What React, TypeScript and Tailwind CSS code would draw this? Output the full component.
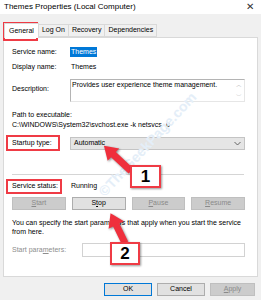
import React from "react";

const font = "font-['Liberation_Sans','Noto_Sans',Arial,sans-serif]";

function Arrow({ x, y, angle, len }: { x: number; y: number; angle: number; len: number }) {
  const h = len - 13;
  return (
    <polygon
      points={`0,-3.5 ${h},-3.5 ${h},-8.5 ${len},0 ${h},8.5 ${h},3.5 0,3.5`}
      transform={`translate(${x} ${y}) rotate(${angle})`}
      fill="#ef2f3c"
    />
  );
}

function Btn({ label, u, state }: { label: string; u: number; state: "on" | "off" | "focus" }) {
  const cls =
    state === "off"
      ? "bg-[#cccccc] border-[#bfbfbf] text-[#8a8a8a]"
      : state === "focus"
      ? "bg-[#e1e1e1] border-[#0078d7] text-black"
      : "bg-[#e1e1e1] border-[#adadad] text-black";
  return (
    <div className={`flex h-[13px] flex-1 items-center justify-center border text-[7px] ${cls}`}>
      <span>
        {label.slice(0, u)}
        <span className="underline">{label[u]}</span>
        {label.slice(u + 1)}
      </span>
    </div>
  );
}

export default function App() {
  return (
    <div className={`relative h-[300px] w-[261px] overflow-hidden bg-[#f0f0f0] text-black ${font}`}>
      {/* title bar */}
      <div className="flex h-[14px] items-center justify-between bg-white pl-[4px] pr-[7px]">
        <span className="text-[8px] leading-none">Themes Properties (Local Computer)</span>
        <span className="text-[10px] leading-none text-[#333]">✕</span>
      </div>

      {/* tabs */}
      <div className="mt-[9px] flex h-[14px] items-end px-[4px] text-[7px]">
        <div className="relative z-10 -mb-px flex h-[15px] items-center border border-b-0 border-[#d9d9d9] bg-white px-[4px]">
          General
        </div>
        <div className="flex h-[13px] items-center border border-l-0 border-[#d9d9d9] bg-[#f0f0f0] px-[3px]">Log On</div>
        <div className="flex h-[13px] items-center border border-l-0 border-[#d9d9d9] bg-[#f0f0f0] px-[3px]">Recovery</div>
        <div className="flex h-[13px] items-center border border-l-0 border-[#d9d9d9] bg-[#f0f0f0] px-[3px]">Dependencies</div>
      </div>

      {/* tab panel */}
      <div className="mx-[3px] h-[240px] border border-[#d9d9d9] bg-white px-[8px] pt-[8px] text-[7px]">
        <div className="flex h-[12px] items-center">
          <span className="w-[58px]">Service name:</span>
          <span className="bg-[#0078d7] px-[1px] text-white">Themes</span>
        </div>
        <div className="mt-[3px] flex h-[12px] items-center">
          <span className="w-[59px]">Display name:</span>
          <span>Themes</span>
        </div>
        <div className="mt-[6px] flex">
          <span className="mt-[5px] w-[58px]">Description:</span>
          <div className="flex h-[23px] w-[175px] border border-[#b4b4b4] border-r-[#e6e6e6] border-b-[#e6e6e6]">
            <span className="flex-1 pl-[1px] pt-[1px] leading-tight">Provides user experience theme management.</span>
            <div className="flex w-[10px] flex-col items-center justify-between py-[2px] text-[6px] leading-none text-[#b0b0b0]">
              <span>︿</span>
              <span>﹀</span>
            </div>
          </div>
        </div>
        <div className="mt-[8px] leading-[10px]">Path to executable:</div>
        <div className="leading-[10px]">C:\WINDOWS\System32\svchost.exe -k netsvcs -p</div>
        <div className="mt-[7px] flex h-[13px] items-center">
          <span className="w-[58px]">Startup type:</span>
          <div className="flex h-[13px] w-[175px] items-center justify-between border border-[#c4c4c4] bg-[#e5e5e5] pl-[3px] pr-[3px]">
            <span>Automatic</span>
            <svg width="7" height="5" viewBox="0 0 7 5">
              <path d="M0.5 1 L3.5 4 L6.5 1" fill="none" stroke="#555" strokeWidth="0.9" />
            </svg>
          </div>
        </div>
        <div className="mt-[24px] mr-[5px] h-px bg-[#d5d5d5]" />
        <div className="mt-[5px] flex h-[12px] items-center">
          <span className="w-[59px]">Service status:</span>
          <span>Running</span>
        </div>
        <div className="mt-[5px] mr-[4px] flex gap-[6px]">
          <Btn label="Start" u={0} state="off" />
          <Btn label="Stop" u={1} state="on" />
          <Btn label="Pause" u={0} state="off" />
          <Btn label="Resume" u={0} state="off" />
        </div>
        <div className="mt-[8px] leading-[9px]">
          You can specify the start parameters that apply when you start the service from here.
        </div>
        <div className="mt-[7px] flex h-[14px] items-center">
          <span className="w-[70px] text-[#8d8d8d]">
            Start para<span className="underline">m</span>eters:
          </span>
          <div className="h-[14px] w-[163px] border border-[#d2d2d2]" />
        </div>
      </div>

      {/* bottom buttons */}
      <div className="mt-[6px] flex justify-end gap-[5px] pr-[6px]">
        <div className="w-[48px]"><Btn label="OK" u={9} state="focus" /></div>
        <div className="w-[48px]"><Btn label="Cancel" u={9} state="on" /></div>
        <div className="w-[45px]"><Btn label="Apply" u={0} state="off" /></div>
      </div>

      {/* watermark */}
      <div className="pointer-events-none absolute left-[80px] top-[134px] -rotate-[47deg] text-[14px] font-bold text-[#e4eef8]">
        ©TheGeekPage.com
      </div>

      {/* annotations */}
      <div className="pointer-events-none absolute left-[3px] top-[22px] h-[19px] w-[35px] border-2 border-[#ef3b45]" />
      <div className="pointer-events-none absolute left-[6px] top-[135px] h-[16px] w-[54px] border-2 border-[#ef3b45]" />
      <div className="pointer-events-none absolute left-[6px] top-[179px] h-[15px] w-[56px] border-2 border-[#ef3b45]" />

      <svg className="pointer-events-none absolute left-0 top-0 drop-shadow-[1.5px_1.5px_1px_rgba(0,0,0,0.45)]" width="261" height="300">
        <Arrow x={131} y={171} angle={-137} len={37} />
        <Arrow x={125} y={243} angle={-116} len={33} />
      </svg>

      <div className="absolute left-[130px] top-[165px] flex h-[23px] w-[31px] items-center justify-center border-2 border-[#ef3b45] bg-white text-[17px] font-bold leading-none shadow-[1px_1px_2px_rgba(0,0,0,0.4)]">
        1
      </div>
      <div className="absolute left-[110px] top-[242px] flex h-[23px] w-[30px] items-center justify-center border-2 border-[#ef3b45] bg-white text-[17px] font-bold leading-none shadow-[1px_1px_2px_rgba(0,0,0,0.4)]">
        2
      </div>
    </div>
  );
}
